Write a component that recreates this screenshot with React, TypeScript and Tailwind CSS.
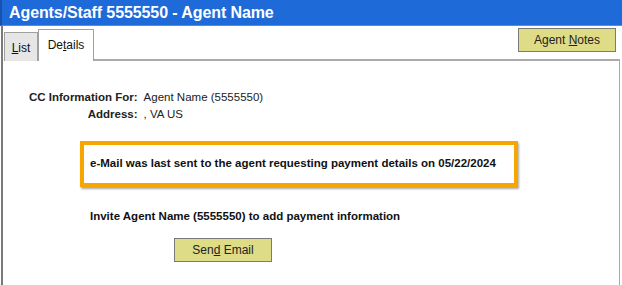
import React from "react";

export default function App() {
  return (
    <div className="w-[622px] h-[285px] bg-white overflow-hidden flex flex-col font-['Liberation_Sans',Arial,sans-serif] text-[#111]">
      <div className="h-[26px] shrink-0 bg-[#1e6ad8] border-l-2 border-[#1552b0] border-b border-b-[#4f8fe8] pl-[7px] text-white font-bold text-[16px] tracking-[-0.1px] leading-[25px] whitespace-nowrap">
        Agents/Staff 5555550 - Agent Name
      </div>
      <div className="flex-1 flex flex-col border-l-2 border-[#7a7a7a] ml-[1px] pl-[1px] pr-[2px]">
        <div className="h-[33px] shrink-0 flex items-start justify-between">
          <div className="flex items-end h-[35px] relative z-10">
            <div className="w-[34px] h-[29px] bg-[#e6e6e6] border border-[#a0a0a0] border-b-0 text-[12px] flex items-center justify-center pt-[1px]">
              <span><span className="underline">L</span>ist</span>
            </div>
            <div className="w-[56px] h-[32px] bg-white border border-[#a0a0a0] border-b-0 text-[12px] flex items-start justify-center pt-[6px]">
              <span>De<span className="underline">t</span>ails</span>
            </div>
          </div>
          <button className="mt-[2px] mr-[4px] w-[98px] h-[24px] bg-[#dfdc87] border border-[#7a7a7a] text-[12px] text-[#222] flex items-center justify-center">
            <span>Agent <span className="underline">N</span>otes</span>
          </button>
        </div>
        <div className="flex-1 border-t-2 border-r border-[#aaaaaa] bg-white pt-[28px]">
          <div className="grid grid-cols-[auto_auto] justify-start gap-x-[6px] ml-[25px] text-[11.5px] leading-[17px]">
            <div className="text-right font-bold text-[#222]">CC Information For:</div>
            <div className="text-[#222]">Agent Name (5555550)</div>
            <div className="text-right font-bold text-[#222]">Address:</div>
            <div className="text-[#222]">, VA US</div>
          </div>
          <div className="mt-[18px] ml-[76px] w-[438px] h-[46px] border-4 border-[#f7a500] shadow-[1px_2px_2px_rgba(0,0,0,0.35)] flex items-center pl-[6px] font-bold text-[11.5px] whitespace-nowrap">
            e-Mail was last sent to the agent requesting payment details on 05/22/2024
          </div>
          <div className="mt-[21px] ml-[86px] font-bold text-[11.5px] leading-[17px] whitespace-nowrap">
            Invite Agent Name (5555550) to add payment information
          </div>
          <button className="mt-[13px] ml-[170px] w-[98px] h-[24px] bg-[#dfdc87] border border-[#7a7a7a] text-[12px] text-[#222] flex items-center justify-center">
            <span>Sen<span className="underline">d</span> Email</span>
          </button>
        </div>
      </div>
    </div>
  );
}
